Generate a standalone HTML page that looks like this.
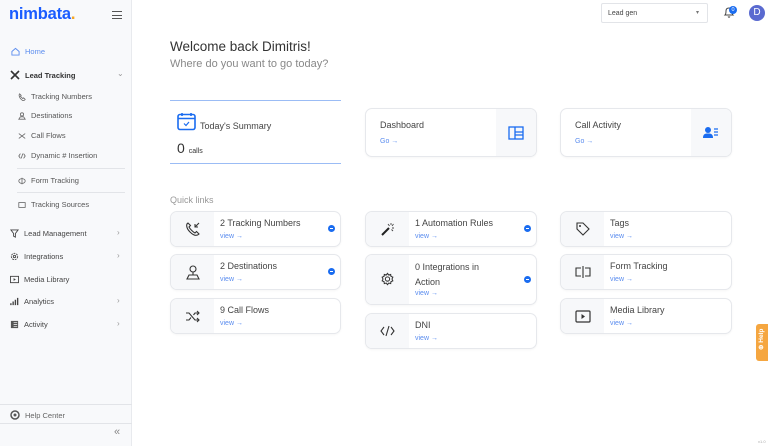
<!DOCTYPE html>
<html><head><meta charset="utf-8"><style>
*{box-sizing:border-box;margin:0;padding:0}
body{width:768px;height:446px;overflow:hidden;font-family:"Liberation Sans",sans-serif;background:#fff;position:relative;color:#333}
.side{position:absolute;left:0;top:0;width:132px;height:446px;background:#f8f9fb;border-right:1px solid #e8eaee}
.logo{position:absolute;left:9px;top:5px;font-size:16.5px;font-weight:bold;color:#1a5cff;letter-spacing:-0.2px}
.logo span{color:#f5a623}
.ham{position:absolute;left:112px;top:11px;width:10px;height:8px;border-top:1.3px solid #555;border-bottom:1.3px solid #555}
.ham:after{content:"";position:absolute;left:0;top:2.5px;width:10px;border-top:1.3px solid #555}
.it{position:absolute;font-size:7.5px;color:#444;display:flex;align-items:center}
.it svg{margin-right:5px}
.sub{color:#555;font-size:7.5px}
.chev{position:absolute;left:117px;font-size:8px;color:#999}
.hr{position:absolute;left:17px;width:108px;border-top:1px solid #e2e4e8}
.t{position:absolute;white-space:nowrap}
.card{position:absolute;border:1px solid #e6e8ec;border-radius:7px;background:#fff;overflow:hidden;box-shadow:0 1px 2px rgba(0,0,0,.04)}
.ic{position:absolute;left:0;top:0;bottom:0;width:43px;background:#f7f8fa;display:flex;align-items:center;justify-content:center}
.ql .ttl{position:absolute;left:49px;top:6px;font-size:9px;color:#444}
.ql .v{position:absolute;left:49px;font-size:7px;color:#5b8def}
.dot{position:absolute;right:5px;width:7px;height:7px;border-radius:50%;background:#1a6cf0}
.dot:after{content:"";position:absolute;left:2px;top:3px;width:3px;border-top:1px solid #fff}
.big .ri{position:absolute;right:0;top:0;bottom:0;width:40px;background:#f7f8fa;display:flex;align-items:center;justify-content:center}
</style></head><body>
<div class="side">
<div class="logo">nimbata<span>.</span></div>
<div class="ham"></div>
<div class="it" style="left:11px;top:47px;color:#5b8def"><svg width="9" height="9" viewBox="0 0 10 10"><path d="M1 5L5 1.5 9 5V9H1Z" fill="none" stroke="#5b8def" stroke-width="1"/></svg>Home</div>
<div class="it" style="left:10px;top:70px;font-weight:bold;color:#333"><svg width="10" height="10" viewBox="0 0 10 10"><path d="M1 1L9 9M9 1L1 9" stroke="#333" stroke-width="1.6"/></svg>Lead Tracking</div>
<div class="chev" style="top:69px">⌄</div>
<div class="it sub" style="left:18px;top:92px"><svg width="8" height="8" viewBox="0 0 10 10"><path d="M2 1C1 2 1 5 4 8S8 9 9 8L7 6 6 7C5 6 4 5 3 4L4 3Z" fill="none" stroke="#666"/></svg>Tracking Numbers</div>
<div class="it sub" style="left:18px;top:111px"><svg width="8" height="8" viewBox="0 0 10 10"><circle cx="5" cy="3" r="2" fill="none" stroke="#666"/><path d="M1 9H9L7 6H3Z" fill="none" stroke="#666"/></svg>Destinations</div>
<div class="it sub" style="left:18px;top:131px"><svg width="8" height="8" viewBox="0 0 10 10"><path d="M1 2L9 8M1 8L9 2" stroke="#666"/></svg>Call Flows</div>
<div class="it sub" style="left:18px;top:151px"><svg width="8" height="8" viewBox="0 0 10 10"><path d="M3 2L1 5 3 8M7 2L9 5 7 8M6 2L4 8" fill="none" stroke="#666"/></svg>Dynamic # Insertion</div>
<div class="hr" style="top:168px"></div>
<div class="it sub" style="left:18px;top:176px"><svg width="8" height="8" viewBox="0 0 10 10"><ellipse cx="5" cy="5" rx="4" ry="3" fill="none" stroke="#666"/><path d="M5 1V9" stroke="#666"/></svg>Form Tracking</div>
<div class="hr" style="top:192px"></div>
<div class="it sub" style="left:18px;top:200px"><svg width="8" height="8" viewBox="0 0 10 10"><rect x="1" y="2" width="8" height="6" fill="none" stroke="#666"/></svg>Tracking Sources</div>
<div class="it" style="left:10px;top:229px"><svg width="9" height="9" viewBox="0 0 10 10"><path d="M1 1H9L6 5V9L4 8V5Z" fill="none" stroke="#444"/></svg>Lead Management</div>
<div class="chev" style="top:228px">›</div>
<div class="it" style="left:10px;top:252px"><svg width="9" height="9" viewBox="0 0 10 10"><circle cx="5" cy="5" r="3.5" fill="none" stroke="#444" stroke-dasharray="2 1"/><circle cx="5" cy="5" r="1.3" fill="none" stroke="#444"/></svg>Integrations</div>
<div class="chev" style="top:251px">›</div>
<div class="it" style="left:10px;top:275px"><svg width="9" height="9" viewBox="0 0 10 10"><rect x=".5" y="1.5" width="9" height="7" fill="none" stroke="#444"/><path d="M4 3.5V6.5L6.5 5Z" fill="#444"/></svg>Media Library</div>
<div class="it" style="left:10px;top:297px"><svg width="9" height="9" viewBox="0 0 10 10"><path d="M1 9V7M3.5 9V5M6 9V3M8.5 9V1" stroke="#444" stroke-width="1.5"/></svg>Analytics</div>
<div class="chev" style="top:296px">›</div>
<div class="it" style="left:10px;top:320px"><svg width="9" height="9" viewBox="0 0 10 10"><rect x="1" y="1" width="8" height="8" fill="#555"/><path d="M4 3H8M4 5H8M4 7H8" stroke="#fff" stroke-width=".8"/></svg>Activity</div>
<div class="chev" style="top:319px">›</div>
<div class="hr" style="left:0;width:132px;top:404px"></div>
<div class="it" style="left:10px;top:410px;color:#666"><svg width="10" height="10" viewBox="0 0 10 10"><circle cx="5" cy="5" r="4" fill="none" stroke="#555" stroke-width="1.5"/><circle cx="5" cy="5" r="1.5" fill="#555"/></svg>Help Center</div>
<div class="hr" style="left:0;width:132px;top:423px"></div>
<div class="t" style="left:114px;top:426px;font-size:11px;color:#888">«</div>
</div>

<div class="t" style="left:601px;top:3px;width:107px;height:20px;border:1px solid #e2e4e8;border-radius:2px;font-size:7px;color:#444;padding:6px 0 0 6px">Lead gen<span style="position:absolute;right:8px;top:5px;font-size:6px;color:#777">▾</span></div>
<svg class="t" style="left:723px;top:6px" width="12" height="13" viewBox="0 0 12 13"><path d="M2 9C3 8 3 7 3 5S4 2 6 2 9 3 9 5 9 8 10 9Z M5 10.5Q6 12 7 10.5" fill="none" stroke="#444" stroke-width="1"/></svg>
<div class="t" style="left:729px;top:6px;width:8px;height:8px;border-radius:50%;background:#1a6cf0;color:#fff;font-size:5.5px;text-align:center;line-height:8px">0</div>
<div class="t" style="left:749px;top:5px;width:16px;height:16px;border-radius:50%;background:#5a6ad0;color:#fff;font-size:10px;text-align:center;line-height:16px">D</div>

<div class="t" style="left:170px;top:39px;font-size:13.5px;color:#333">Welcome back Dimitris!</div>
<div class="t" style="left:170px;top:58px;font-size:11px;color:#888">Where do you want to go today?</div>

<div class="t" style="left:170px;top:100px;width:171px;border-top:1px solid #9bbcf5"></div>
<div class="t" style="left:170px;top:163px;width:171px;border-top:1px solid #9bbcf5"></div>
<svg class="t" style="left:177px;top:112px" width="19" height="19" viewBox="0 0 19 19"><rect x="1" y="2.5" width="17" height="15" rx="2" fill="none" stroke="#1a6cf0" stroke-width="1.6"/><path d="M1 6.5H18M5 1V4M14 1V4" stroke="#1a6cf0" stroke-width="1.6"/><path d="M7 11.5L9 13.5 12 10" fill="none" stroke="#1a6cf0" stroke-width="1.2"/></svg>
<div class="t" style="left:200px;top:121px;font-size:9px;color:#444">Today's Summary</div>
<div class="t" style="left:177px;top:140px;font-size:14px;color:#333">0 <span style="font-size:7px">calls</span></div>

<div class="card big" style="left:365px;top:108px;width:172px;height:49px">
<div class="t" style="left:14px;top:11px;font-size:9px;color:#444">Dashboard</div>
<div class="t" style="left:14px;top:29px;font-size:7px;color:#5b8def">Go →</div>
<div class="ri"><svg width="16" height="14" viewBox="0 0 16 14"><rect x="1" y="1" width="14" height="12" fill="none" stroke="#1a6cf0" stroke-width="1.3"/><path d="M7 1V13M7 6H15M7 9H15" stroke="#1a6cf0" stroke-width="1.3"/></svg></div></div>
<div class="card big" style="left:560px;top:108px;width:172px;height:49px">
<div class="t" style="left:14px;top:11px;font-size:9px;color:#444">Call Activity</div>
<div class="t" style="left:14px;top:29px;font-size:7px;color:#5b8def">Go →</div>
<div class="ri"><svg width="16" height="13" viewBox="0 0 16 13"><circle cx="5" cy="4" r="3" fill="#1a6cf0"/><path d="M0 12C0 8 2 7.5 5 7.5S10 8 10 12Z" fill="#1a6cf0"/><path d="M11 3H15M11 6H15M11 9H15" stroke="#1a6cf0" stroke-width="1.2"/></svg></div></div>

<div class="t" style="left:170px;top:195px;font-size:9px;color:#999">Quick links</div>

<div class="card ql" style="left:170px;top:211px;width:171px;height:36px"><div class="ic"><svg width="16" height="16" viewBox="0 0 16 16"><path d="M3 2C1 3 1 7 5 11S12 15 14 13L11.5 10.5 10 12C8 11 5 8 4 6L5.5 4.5Z" fill="none" stroke="#333" stroke-width="1.1"/><path d="M14 2L10 6M10 3V6H13" fill="none" stroke="#333" stroke-width="1.1"/></svg></div><div class="ttl">2 Tracking Numbers</div><div class="v" style="top:21px">view →</div><div class="dot" style="top:13px"></div></div>
<div class="card ql" style="left:170px;top:254px;width:171px;height:36px"><div class="ic"><svg width="14" height="16" viewBox="0 0 14 16"><circle cx="7" cy="5" r="3" fill="none" stroke="#333" stroke-width="1.1"/><path d="M7 8V11M1 15H13L11 11H3Z" fill="none" stroke="#333" stroke-width="1.1"/></svg></div><div class="ttl">2 Destinations</div><div class="v" style="top:21px">view →</div><div class="dot" style="top:13px"></div></div>
<div class="card ql" style="left:170px;top:298px;width:171px;height:36px"><div class="ic"><svg width="15" height="13" viewBox="0 0 15 13"><path d="M1 3H4L10 10H14M1 10H4L6 7.5M8.5 5L10 3H14M12 1L14 3 12 5M12 8L14 10 12 12" fill="none" stroke="#333" stroke-width="1.1"/></svg></div><div class="ttl">9 Call Flows</div><div class="v" style="top:21px">view →</div></div>

<div class="card ql" style="left:365px;top:211px;width:172px;height:36px"><div class="ic"><svg width="14" height="14" viewBox="0 0 14 14"><path d="M1 13L8 6" stroke="#222" stroke-width="2"/><path d="M10 1V3M12.5 2L11 4M13 6H11M7 2L8.5 4M12 9L10.5 7.5" stroke="#444" stroke-width=".9"/></svg></div><div class="ttl">1 Automation Rules</div><div class="v" style="top:21px">view →</div><div class="dot" style="top:13px"></div></div>
<div class="card ql" style="left:365px;top:254px;width:172px;height:51px"><div class="ic"><svg width="15" height="15" viewBox="0 0 16 16"><path d="M8 1.5L9.3 3.2 11.4 2.6 11.7 4.7 13.7 5.5 12.8 7.5 13.7 9.5 11.7 10.3 11.4 12.4 9.3 11.8 8 13.5 6.7 11.8 4.6 12.4 4.3 10.3 2.3 9.5 3.2 7.5 2.3 5.5 4.3 4.7 4.6 2.6 6.7 3.2Z" fill="none" stroke="#333" stroke-width="1.1"/><circle cx="8" cy="7.5" r="2.3" fill="none" stroke="#333" stroke-width="1.1"/></svg></div><div class="ttl" style="line-height:15px;top:5px">0 Integrations in<br>Action</div><div class="v" style="top:35px">view →</div><div class="dot" style="top:21px"></div></div>
<div class="card ql" style="left:365px;top:313px;width:172px;height:36px"><div class="ic"><svg width="15" height="12" viewBox="0 0 15 12"><path d="M4 2L1 6 4 10M11 2L14 6 11 10M9 1L6 11" fill="none" stroke="#333" stroke-width="1.1"/></svg></div><div class="ttl">DNI</div><div class="v" style="top:21px">view →</div></div>

<div class="card ql" style="left:560px;top:211px;width:172px;height:36px"><div class="ic"><svg width="14" height="14" viewBox="0 0 14 14"><path d="M1 1H7L13 7 7 13 1 7Z" fill="none" stroke="#333" stroke-width="1.1"/><circle cx="4" cy="4" r="1" fill="#333"/></svg></div><div class="ttl">Tags</div><div class="v" style="top:21px">view →</div></div>
<div class="card ql" style="left:560px;top:254px;width:172px;height:36px"><div class="ic"><svg width="16" height="12" viewBox="0 0 16 12"><path d="M6 2H1V10H6M10 2H15V10H10M8 0V12" fill="none" stroke="#333" stroke-width="1.1"/></svg></div><div class="ttl">Form Tracking</div><div class="v" style="top:21px">view →</div></div>
<div class="card ql" style="left:560px;top:298px;width:172px;height:36px"><div class="ic"><svg width="16" height="13" viewBox="0 0 16 13"><rect x="1" y="1" width="14" height="11" rx="1" fill="none" stroke="#333" stroke-width="1.2"/><path d="M6.5 4V9L10 6.5Z" fill="#333"/></svg></div><div class="ttl">Media Library</div><div class="v" style="top:21px">view →</div></div>

<div class="t" style="left:756px;top:324px;width:12px;height:37px;background:#f5a640;border-radius:3px 0 0 3px"><div style="position:absolute;left:1px;top:26px;transform:rotate(-90deg);transform-origin:0 0;font-size:6.5px;color:#fff;font-weight:bold;white-space:nowrap">⊕ Help</div></div>
<div class="t" style="left:758px;top:439px;font-size:4px;color:#aaa">v1.0</div>
</body></html>
